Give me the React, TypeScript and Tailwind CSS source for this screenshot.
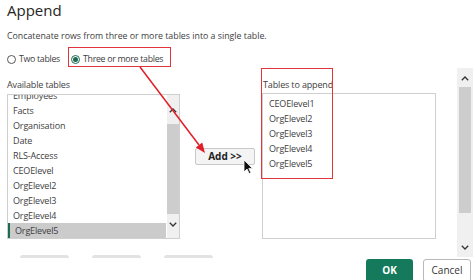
import React from 'react';

const available = [
  'Employees',
  'Facts',
  'Organisation',
  'Date',
  'RLS-Access',
  'CEOElevel',
  'OrgElevel2',
  'OrgElevel3',
  'OrgElevel4',
  'OrgElevel5',
];

const toAppend = ['CEOElevel1', 'OrgElevel2', 'OrgElevel3', 'OrgElevel4', 'OrgElevel5'];

const Chevron: React.FC<{ up?: boolean }> = ({ up }) => (
  <svg width="8" height="5" viewBox="0 0 8 5" className="block">
    <polyline
      points={up ? '0.8,4.2 4,1 7.2,4.2' : '0.8,0.8 4,4 7.2,0.8'}
      fill="none"
      stroke="#333"
      strokeWidth="1.3"
    />
  </svg>
);

const Radio: React.FC<{ checked?: boolean; label: string }> = ({ checked, label }) => (
  <div className="flex items-center gap-[3px]">
    <span
      className={`w-[9px] h-[9px] rounded-full border flex items-center justify-center ${
        checked ? 'border-[#1b6b50]' : 'border-[#555]'
      }`}
    >
      {checked && <span className="w-[5px] h-[5px] rounded-full bg-[#1b6b50]" />}
    </span>
    <span>{label}</span>
  </div>
);

const App: React.FC = () => {
  return (
    <div
      className="relative w-[474px] h-[280px] overflow-hidden bg-white text-[#404040]"
      style={{ fontFamily: '"Open Sans", "Noto Sans", sans-serif' }}
    >
      {/* header */}
      <div className="pl-[7px] h-[68px]">
        <div className="text-[15px] leading-[20px] text-[#252525]">Append</div>
        <div className="text-[8.8px] leading-[14px] mt-[9px]">
          Concatenate rows from three or more tables into a single table.
        </div>
        <div className="flex gap-[11px] text-[8.8px] tracking-[-0.3px] leading-[14px] mt-[9px]">
          <Radio label="Two tables" />
          <Radio checked label="Three or more tables" />
        </div>
      </div>

      {/* body */}
      <div className="flex h-[189px]">
        <div className="flex-1 flex flex-col pt-[9px]">
          <div className="flex items-start text-[9px] tracking-[-0.15px]">
            <div className="ml-[7px] w-[173px]">
              <div className="leading-[16px]">Available tables</div>
              <div className="mt-[1px] h-[145px] border border-[#cfcfcf] flex overflow-hidden">
                <div className="flex-1 overflow-hidden">
                  <div className="mt-[-7px]">
                    {available.map((t, i) => (
                      <div
                        key={t}
                        className={`h-[15px] leading-[15px] pl-[5px] ${
                          i === available.length - 1
                            ? 'bg-[#cbcbcb] border-l-2 border-[#1b6b50] pl-[3px] mr-[1px]'
                            : ''
                        }`}
                      >
                        {t}
                      </div>
                    ))}
                  </div>
                </div>
                <div className="w-[12px] bg-[#f0f0f0] flex flex-col items-center">
                  <div className="h-[29px] flex items-center justify-center pt-[1px]">
                    <Chevron up />
                  </div>
                  <div className="w-full h-[90px] bg-[#cdcdcd]" />
                  <div className="h-[20px] flex items-start justify-center pt-[8px]">
                    <Chevron />
                  </div>
                </div>
              </div>
            </div>

            <button className="ml-[15px] mt-[71px] w-[60px] h-[17px] bg-[#f4f4f4] border border-[#c8c8c8] rounded-[2px] text-[10px] tracking-normal font-bold text-[#222] leading-[15px]">
              Add &gt;&gt;
            </button>

            <div className="ml-[7px] w-[174px]">
              <div className="leading-[16px] pl-[1px]">Tables to append</div>
              <div className="h-[146px] border border-[#cfcfcf] pt-[2px]">
                {toAppend.map((t) => (
                  <div key={t} className="h-[15px] leading-[15px] pl-[6px]">
                    {t}
                  </div>
                ))}
              </div>
            </div>
          </div>

          <div className="flex gap-[23px] ml-[20px] mt-[16px]">
            <div className="w-[49px] h-[3px] rounded-t-[3px] bg-[#e2e2e2]" />
            <div className="w-[49px] h-[3px] rounded-t-[3px] bg-[#e2e2e2]" />
            <div className="w-[49px] h-[3px] rounded-t-[3px] bg-[#e2e2e2]" />
          </div>
        </div>

        <div className="w-[16px] mr-[1px] bg-[#f0f0f0] flex flex-col items-center">
          <div className="h-[19px] flex items-center justify-center pt-[2px]">
            <Chevron up />
          </div>
          <div className="w-[12px] h-[126px] bg-[#cdcdcd]" />
          <div className="flex-1 flex items-center justify-center pt-[24px]">
            <Chevron />
          </div>
        </div>
      </div>

      {/* footer */}
      <div className="flex justify-end gap-[10px] pr-[3px] pt-[2px]">
        <button className="w-[47px] h-[23px] rounded-[3px] bg-[#157a5c] text-white text-[10px] font-bold">
          OK
        </button>
        <button className="w-[48px] h-[23px] rounded-[3px] bg-white border border-[#b9b9b9] text-[#333] text-[10px]">
          Cancel
        </button>
      </div>

      {/* annotations */}
      <div className="absolute left-[68px] top-[47px] w-[103px] h-[20px] border-[1.5px] border-[#e0353d] pointer-events-none" />
      <div className="absolute left-[261px] top-[68px] w-[72px] h-[111px] border-[1.5px] border-[#e0353d] pointer-events-none" />
      <svg className="absolute inset-0 pointer-events-none" width="474" height="280">
        <line x1="140" y1="67" x2="199" y2="145" stroke="#e02028" strokeWidth="1.5" />
        <polygon points="205,153 202.2,142.6 195.8,147.4" fill="#e02028" />
        <path
          d="M244 160 L244 172 L247 169 L249.2 173.6 L250.9 172.8 L248.8 168.4 L252.5 168.4 Z"
          fill="#111"
          stroke="#fff"
          strokeWidth="0.8"
        />
      </svg>
    </div>
  );
};

export default App;
